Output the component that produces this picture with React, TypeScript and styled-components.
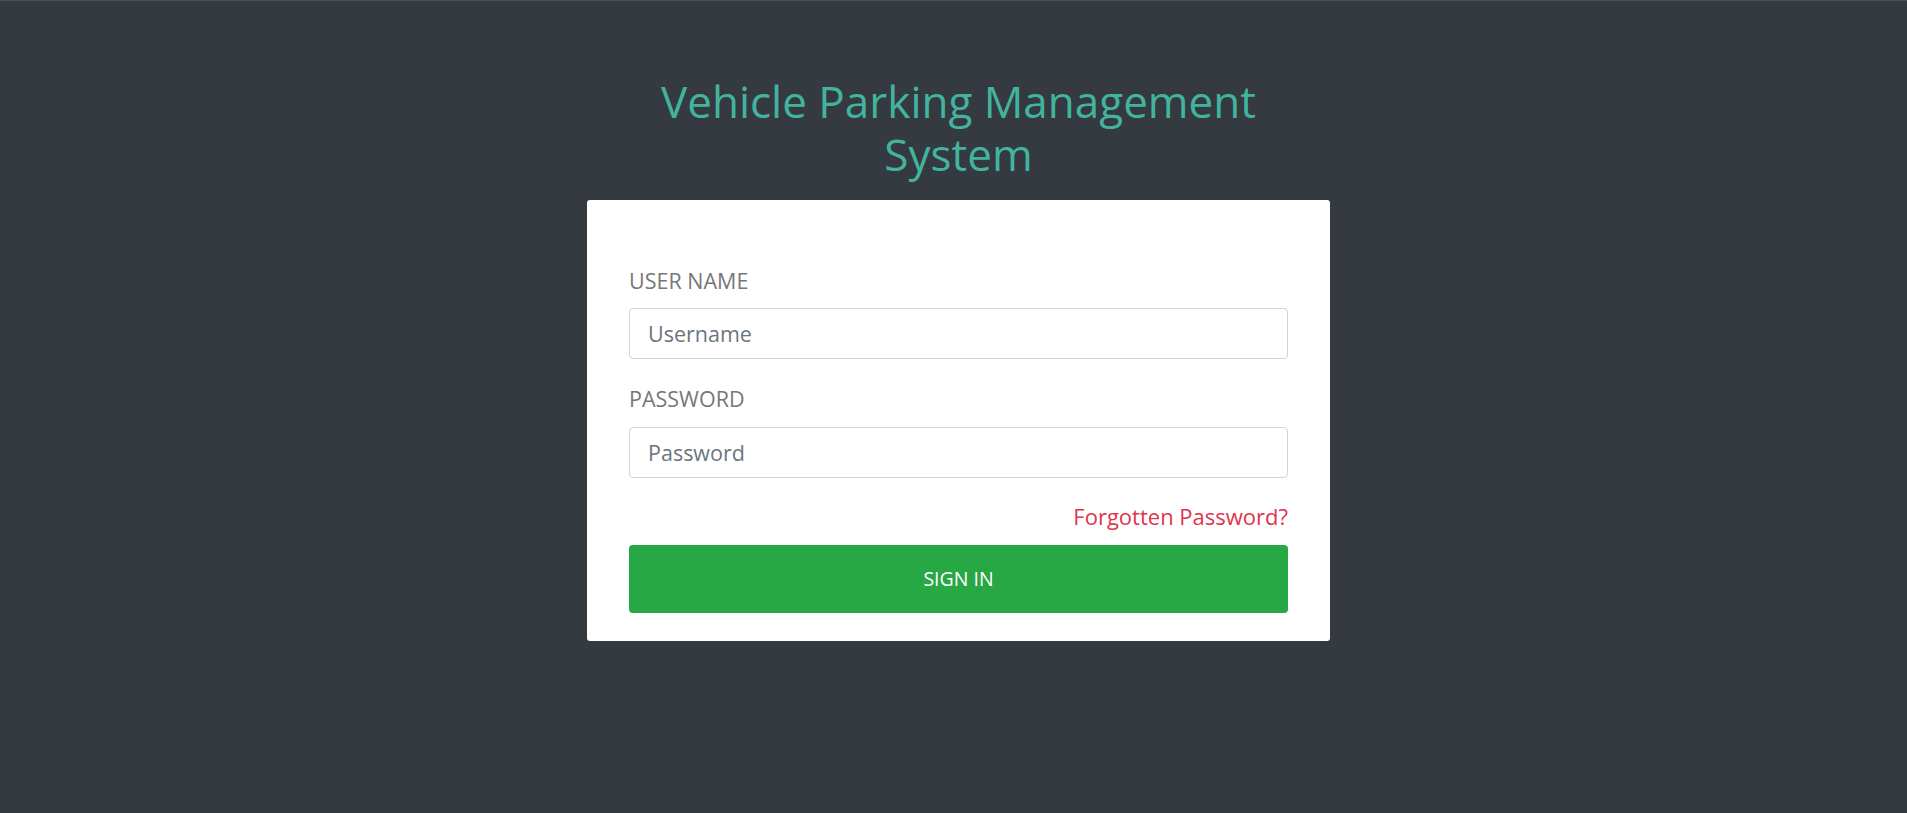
import React from "react";
import styled, { createGlobalStyle } from "styled-components";

const GlobalStyle = createGlobalStyle`
  html, body {
    margin: 0;
    padding: 0;
    background: #343a40;
    font-family: "Open Sans", "Liberation Sans", sans-serif;
  }
  * { box-sizing: border-box; }
`;

const Page = styled.div`
  min-height: 813px;
  border-top: 1px solid #4a4f56;
  display: flex;
  flex-direction: column;
  align-items: center;
  padding: 74px 0 0 10px;
`;

const Title = styled.h1`
  margin: 0 0 19px;
  max-width: 700px;
  text-align: center;
  font-size: 44px;
  font-weight: 400;
  line-height: 52.8px;
  color: #42b49e;
`;

const Card = styled.div`
  width: 743px;
  background: #ffffff;
  border-radius: 3px;
  padding: 64px 42px 28px;
  display: flex;
  flex-direction: column;
`;

const Field = styled.div`
  display: flex;
  flex-direction: column;
  margin-bottom: ${(p: { $mb: number }) => p.$mb}px;
`;

const Label = styled.label`
  font-size: 21.5px;
  line-height: 33px;
  color: #777777;
  margin-bottom: 11.5px;
`;

const Input = styled.input`
  height: 51px;
  width: 100%;
  border: 1px solid #ced4da;
  border-radius: 4px;
  padding: 0 18px;
  font-family: "Open Sans", "Liberation Sans", sans-serif;
  font-size: 21.5px;
  color: #495057;
  outline: none;
  &::placeholder {
    color: #6c757d;
  }
`;

const ForgotRow = styled.div`
  display: flex;
  justify-content: flex-end;
  margin-bottom: 14px;
`;

const ForgotLink = styled.a`
  font-size: 22px;
  line-height: 30px;
  color: #e0344a;
  text-decoration: none;
`;

const SignInButton = styled.button`
  height: 68.5px;
  width: 100%;
  border: none;
  border-radius: 4px;
  background: #28a745;
  color: #ffffff;
  font-family: "Open Sans", "Liberation Sans", sans-serif;
  font-size: 19.5px;
  text-transform: uppercase;
  display: flex;
  align-items: center;
  justify-content: center;
  cursor: pointer;
`;

export default function App() {
  return (
    <>
      <GlobalStyle />
      <Page>
        <Title>Vehicle Parking Management System</Title>
        <Card>
          <Field $mb={23}>
            <Label>USER NAME</Label>
            <Input type="text" placeholder="Username" />
          </Field>
          <Field $mb={23}>
            <Label>PASSWORD</Label>
            <Input type="password" placeholder="Password" />
          </Field>
          <ForgotRow>
            <ForgotLink href="#">Forgotten Password?</ForgotLink>
          </ForgotRow>
          <SignInButton type="button">Sign In</SignInButton>
        </Card>
      </Page>
    </>
  );
}
